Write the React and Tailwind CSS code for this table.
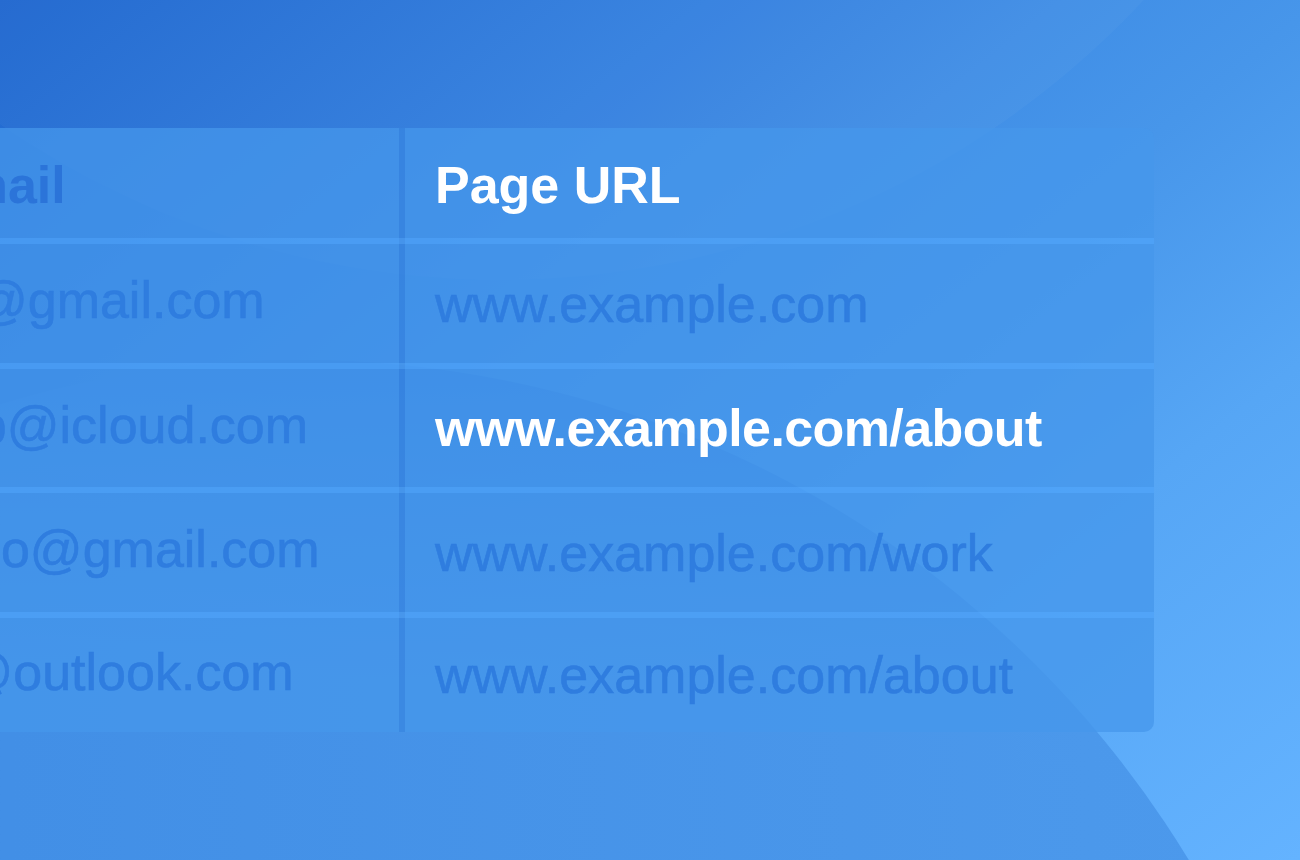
import React from "react";

const rows = [
  { email: "tia@gmail.com", url: "www.example.com", active: false, h: "h-[119px]" },
  { email: "bob@icloud.com", url: "www.example.com/about", active: true, h: "h-[118px]" },
  { email: "hello@gmail.com", url: "www.example.com/work", active: false, h: "h-[119px]" },
  { email: "jo@outlook.com", url: "www.example.com/about", active: false, h: "h-[114px]" },
];

function Separator() {
  return (
    <div className="flex h-[6px] w-full">
      <div className="w-[509px] bg-[#4fa2f8]/80" />
      <div className="w-[6px] bg-[#4898ee]/80" />
      <div className="flex-1 bg-[#4fa2f8]/80" />
    </div>
  );
}

export default function App() {
  return (
    <div
      className="relative w-[1300px] h-[860px] overflow-hidden bg-[linear-gradient(141deg,#1f67cf_0%,#3480df_30%,#408ee6_45%,#4796ea_56%,#56a6f5_74%,#64b3ff_100%)]"
      style={{ fontFamily: '"Liberation Sans", Arial, sans-serif' }}
    >
      {/* decorative background shapes */}
      <div className="absolute left-[-380px] top-[-1480px] w-[1760px] h-[1760px] rounded-full bg-white/[0.03]" />
      <div className="absolute left-[-740px] top-[360px] w-[2080px] h-[2080px] rounded-full bg-[linear-gradient(180deg,rgba(45,120,218,0.85)_0px,rgba(45,120,218,0.4)_150px,rgba(45,120,218,0)_320px),linear-gradient(90deg,#3f8ce5_0%,#428fe6_36%,#4b98eb_88%,#4d9aed_100%)]" />

      <div className="relative pt-[128px]">
        <div className="ml-[-110px] w-[1264px] flex flex-col overflow-hidden rounded-r-[10px]">
          {/* header */}
          <div className="flex h-[110px]">
            <div className="w-[509px] flex items-center pl-[37px] pt-[3px] bg-[#4697eb]/75">
              <span className="text-[52px] font-bold text-[#2b74d9] whitespace-nowrap">Email</span>
            </div>
            <div className="w-[6px] bg-[#3886e0]/75" />
            <div className="flex-1 flex items-center pl-[30px] pt-[3px] bg-[#4697eb]/75">
              <span className="text-[52px] font-bold text-white whitespace-nowrap">Page URL</span>
            </div>
          </div>

          {rows.map((r, i) => (
            <React.Fragment key={i}>
              <Separator />
              <div className={`flex ${r.h}`}>
                <div className="w-[509px] flex items-center pl-[30px] pb-[7px] bg-[#4697eb]/75">
                  <span className="text-[52px] text-[#2f7ddf] [-webkit-text-stroke:0.6px_#2f7ddf] whitespace-nowrap">
                    {r.email}
                  </span>
                </div>
                <div className="w-[6px] bg-[#3886e0]/75" />
                <div className="flex-1 flex items-center pl-[30px] bg-[#4697eb]/75">
                  {r.active ? (
                    <span className="text-[52px] font-bold tracking-[-0.6px] text-white whitespace-nowrap">{r.url}</span>
                  ) : (
                    <span className="text-[52px] text-[#2f7ddf] [-webkit-text-stroke:0.6px_#2f7ddf] whitespace-nowrap">
                      {r.url}
                    </span>
                  )}
                </div>
              </div>
            </React.Fragment>
          ))}
        </div>
      </div>
    </div>
  );
}
